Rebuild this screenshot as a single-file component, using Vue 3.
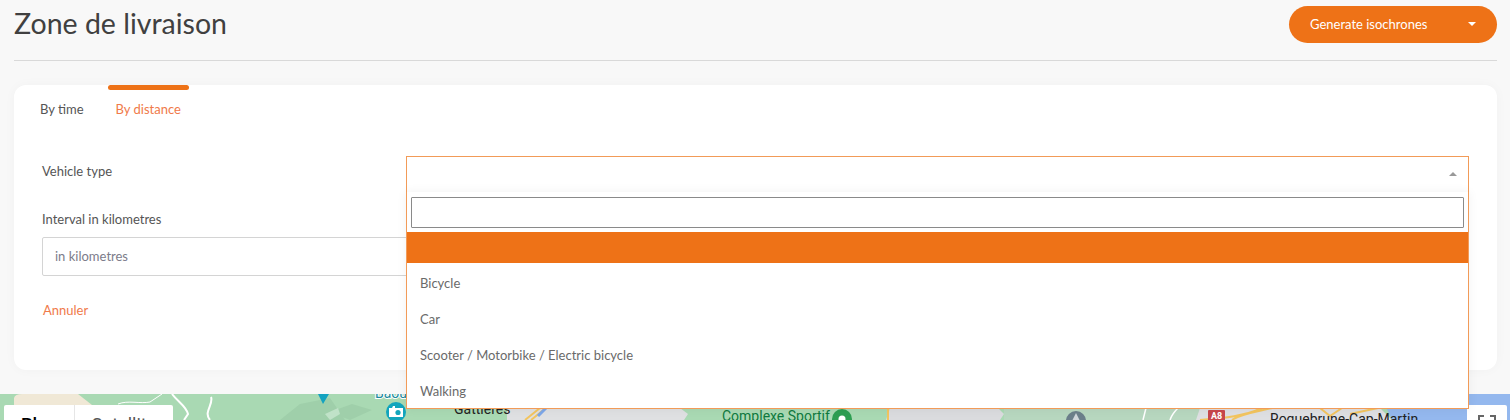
<script setup>
const options = ['Bicycle', 'Car', 'Scooter / Motorbike / Electric bicycle', 'Walking']
</script>

<template>
  <div class="page">
    <header class="head">
      <h1>Zone de livraison</h1>
      <button class="gen">
        <span>Generate isochrones</span>
        <i class="caret"></i>
      </button>
    </header>

    <section class="card">
      <nav class="tabs">
        <a class="tab">By time</a>
        <a class="tab on">By distance</a>
      </nav>
      <div class="form">
        <div class="row">
          <label>Vehicle type</label>
          <div class="select">
            <i class="up"></i>
            <div class="drop">
              <div class="searchwrap"><div class="search"></div></div>
              <div class="opt sel"></div>
              <div v-for="o in options" :key="o" class="opt">{{ o }}</div>
            </div>
          </div>
        </div>
        <label class="l2">Interval in kilometres</label>
        <div class="input">in kilometres</div>
        <a class="cancel">Annuler</a>
      </div>
    </section>

    <section class="map">
      <svg class="mapbg" width="1510" height="26" viewBox="0 394 1510 26">
        <rect x="0" y="394" width="1510" height="26" fill="#a9d9b3" />
        <path d="M14 398Q15 394 22 394H78L92 405V420H14Z" fill="#f0e8d6" />
        <path d="M280 420L300 404L330 398L345 420ZM330 412L352 404L372 410L350 420Z" fill="#9fcfaa" />
        <path d="M325 414L338 408L340 414L330 420Z" fill="#c0e2c8" />
        <path d="M507 408H680L688 414L684 420H507Z" fill="#dfe0e2" />
        <path d="M890 408H998L1004 414L1000 420H886Z" fill="#dadbde" />
        <path d="M1004 408H1200V420H1004Z" fill="#b7d7bf" />
        <path d="M1200 408H1380L1392 420H1196Z" fill="#dedfe2" />
        <path d="M1380 394H1510V420H1392Z" fill="#94b8ee" />
        <path d="M172 394C178 402 186 406 188 414L184 420M210 420C203 412 214 404 211 397" fill="none" stroke="#fff" stroke-width="2" />
        <path d="M118 404C128 400 140 404 150 402L162 394" fill="none" stroke="#fff" stroke-width="1" />
        <path d="M525 420L540 408M531 420L546 408" fill="none" stroke="#f2c45f" stroke-width="2" />
        <path d="M538 416L546 408" fill="none" stroke="#7da7e8" stroke-width="3" />
        <path d="M888 408V420" fill="none" stroke="#f2c45f" stroke-width="2" />
        <path d="M1143 420L1146 408M1170 420C1172 414 1176 410 1178 408" fill="none" stroke="#fff" stroke-width="1.5" />
        <path d="M1200 420C1225 418 1245 416 1262 408M1232 420C1240 414 1255 412 1272 408" fill="none" stroke="#f2c45f" stroke-width="2" />
        <path d="M1320 408L1330 416L1342 408M1350 414L1378 408" fill="none" stroke="#f2c45f" stroke-width="2" />
        <path d="M318 394H329L323 404Z" fill="#14a3c0" />
        <circle cx="396" cy="412" r="10" fill="#12a5bd" />
        <path d="M389 408H392L393 406H395V408H403V417H389Z" fill="#fff" />
        <circle cx="398" cy="412.5" r="2.6" fill="#12a5bd" />
        <circle cx="842" cy="419" r="10" fill="#2e9e52" />
        <circle cx="842" cy="419" r="3.5" fill="#fff" />
        <circle cx="1076" cy="421" r="10" fill="#6b7f8a" />
        <path d="M1076 413L1080 421H1072Z" fill="#cfd6da" />
        <rect x="1208" y="410" width="17" height="11" rx="1" fill="#c8474b" />
        <text x="1211" y="419" class="shield">A8</text>
        <text x="454" y="414" class="place">Gattières</text>
        <text x="722" y="421" class="green">Complexe Sportif</text>
        <text x="1270" y="424" class="town">Roquebrune-Cap-Martin</text>
        <text x="375" y="398" class="blue">Baou</text>
      </svg>
      <div class="maptype">
        <span class="mt a">Plan</span>
        <span class="mt">Satellite</span>
      </div>
      <div class="fs">
        <svg width="18" height="18" viewBox="0 0 18 18" fill="none" stroke="#666" stroke-width="2">
          <path d="M1 7V1H6M12 1H17V7" />
        </svg>
      </div>
    </section>
  </div>
</template>

<style scoped>
.page {
  width: 1510px;
  height: 420px;
  overflow: hidden;
  background: #f8f8f8;
  font-family: "Lato", "Noto Sans", sans-serif;
  color: #555;
  font-size: 13px;
}
.head {
  height: 60px;
  margin: 0 13px 0 14px;
  border-bottom: 1px solid #d9d9d9;
  display: flex;
  justify-content: space-between;
  align-items: flex-start;
}
h1 {
  margin: 5px 0 0;
  font-size: 28.5px;
  font-weight: 400;
  line-height: 36px;
  color: #404040;
}
.gen {
  margin-top: 6px;
  width: 208px;
  height: 37px;
  border: 0;
  border-radius: 19px;
  background: #ee7217;
  color: #fff;
  font: inherit;
  font-size: 13px;
  padding: 0 21px 2px;
  display: flex;
  align-items: center;
  justify-content: space-between;
}
.caret {
  width: 0;
  height: 0;
  border: 4px solid transparent;
  border-top-color: #fff;
  border-bottom: 0;
}
.card {
  margin: 24px 13px 0 14px;
  height: 285px;
  background: #fff;
  border-radius: 12px;
  box-shadow: 0 0 12px rgba(0, 0, 0, 0.03);
}
.tabs {
  display: flex;
  padding-left: 18px;
  height: 49px;
}
.tab {
  position: relative;
  padding: 16px 8px 0;
  margin-right: 16px;
  line-height: 16px;
}
.tab.on {
  color: #f07a4a;
}
.tab.on::before {
  content: "";
  position: absolute;
  left: 0;
  right: 0;
  top: 0;
  height: 5px;
  background: #ee7217;
  border-radius: 3px;
}
.form {
  padding: 22px 28px 0;
}
.row {
  display: flex;
  height: 39px;
}
.row label {
  width: 364px;
  line-height: 30px;
  flex: none;
}
.select {
  position: relative;
  width: 1063px;
  height: 39px;
  box-sizing: border-box;
  border: 1px solid #f29b58;
}
.up {
  position: absolute;
  right: 11px;
  top: 15px;
  width: 0;
  height: 0;
  border: 4px solid transparent;
  border-bottom-color: #999;
  border-top: 0;
}
.drop {
  position: absolute;
  z-index: 5;
  left: -1px;
  right: -1px;
  top: 35px;
  height: 217px;
  overflow: hidden;
  box-sizing: border-box;
  background: #fff;
  border: 1px solid #f29b58;
  border-top: 0;
  box-shadow: 0 0 10px rgba(0, 0, 0, 0.06);
}
.searchwrap {
  padding: 5px 4px 4px;
}
.search {
  height: 31px;
  box-sizing: border-box;
  border: 1px solid #8a8a8a;
  border-radius: 1px;
}
.opt {
  height: 36px;
  line-height: 36px;
  padding-left: 13px;
  color: #6a6a6a;
}
.opt.sel {
  height: 31px;
  margin-bottom: 2px;
  background: #ee7217;
}
.l2 {
  display: block;
  margin-top: 14px;
  line-height: 20px;
}
.input {
  margin-top: 8px;
  width: 420px;
  height: 39px;
  box-sizing: border-box;
  border: 1px solid #d4d4d4;
  border-radius: 2px;
  padding-left: 12px;
  line-height: 37px;
  color: #7c7c8a;
}
.cancel {
  display: block;
  margin-top: 24px;
  padding-left: 1px;
  line-height: 20px;
  color: #f07a4a;
}
.map {
  position: relative;
  margin-top: 24px;
  height: 26px;
  overflow: hidden;
}
.mapbg {
  display: block;
}
.shield {
  font: 700 9px "Roboto", sans-serif;
  fill: #fff;
}
.place {
  font: 14px "Roboto", sans-serif;
  fill: #222;
}
.town {
  font: 14px "Roboto", sans-serif;
  fill: #222;
}
.green {
  font: 14px "Roboto", sans-serif;
  fill: #0f7a40;
}
.blue {
  font: 14px "Roboto", sans-serif;
  fill: #1a8aa0;
  paint-order: stroke;
  stroke: #fff;
  stroke-width: 2px;
}
.maptype {
  position: absolute;
  left: 4px;
  top: 11px;
  height: 40px;
  display: flex;
  background: #fff;
  border-radius: 2px;
  font: 18px "Roboto", sans-serif;
}
.mt {
  padding: 9px 17px 0;
  color: #565656;
}
.mt.a {
  color: #000;
  font-weight: 500;
  border-right: 1px solid #e6e6e6;
}
.fs {
  position: absolute;
  right: 3px;
  top: 11px;
  width: 40px;
  height: 40px;
  background: #fff;
  border-radius: 2px;
  display: flex;
  justify-content: center;
  padding-top: 10px;
  box-sizing: border-box;
}
</style>
